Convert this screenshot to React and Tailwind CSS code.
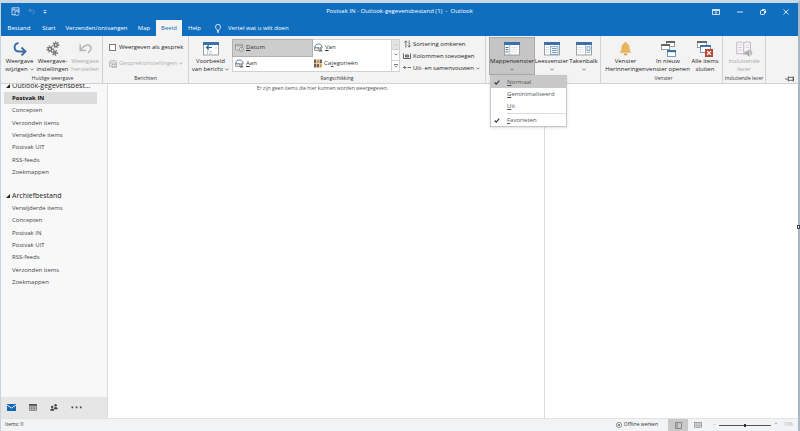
import React from 'react';

const tabs = [
  { name: 'Bestand', width: 'w-[36px]' },
  { name: 'Start', width: 'w-[24px]' },
  { name: 'Verzenden/ontvangen', width: 'w-[71px]' },
  { name: 'Map', width: 'w-[24px]' },
  { name: 'Beeld', width: 'w-[26px]' },
  { name: 'Help', width: 'w-[25px]' },
];

const mailFolders = ['Postvak IN', 'Concepten', 'Verzonden items', 'Verwijderde items', 'Postvak UIT', 'RSS-feeds', 'Zoekmappen'];
const archiveFolders = ['Verwijderde items', 'Concepten', 'Postvak IN', 'Postvak UIT', 'RSS-feeds', 'Verzonden items', 'Zoekmappen'];

function Svg({ className, box, children }) {
  return (
    <svg className={`shrink-0 ${className}`} viewBox={box} fill="none" aria-hidden="true">
      {children}
    </svg>
  );
}

function Chevron({ className = 'text-[#666]' }) {
  return (
    <Svg className={`h-[3px] w-[4px] ${className}`} box="0 0 4 3">
      <path d="M.5 .7 2 2.1 3.5 .7" stroke="currentColor" strokeWidth=".8" />
    </Svg>
  );
}

function Gear({ cx, cy, r }) {
  return (
    <g stroke="#747474">
      <circle cx={cx} cy={cy} r={r} strokeWidth="1.5" />
      <circle cx={cx} cy={cy} r={r + 1.3} strokeWidth="1.3" strokeDasharray="1.2 1.3" />
    </g>
  );
}

function WindowIcon({ variant }) {
  return (
    <Svg className="h-[14px] w-[16px]" box="0 0 16 14">
      <rect x=".5" y=".5" width="15" height="12.5" fill="#fff" stroke="#8b8b8b" strokeWidth=".8" />
      <path d="M0 0h16v3H0z" fill="#3b70a8" />
      {variant === 'preview' && (
        <>
          <path d="M4.5 3v10" stroke="#aaa" strokeWidth=".6" />
          <path d="M9 5.5H3.500m2.400-2-2.400 2 2.400 2" stroke="#2767a5" strokeWidth="1.2" />
          <path d="M6 9.5h3M6 11.3h3M12 6h2" stroke="#b6b6b6" strokeWidth=".7" />
        </>
      )}
      {variant === 'folders' && (
        <>
          <path d="M5.7 3v10" stroke="#8b8b8b" strokeWidth=".6" />
          <path d="M1.5 5.5h3M1.5 7.7h3M1.5 9.9h3" stroke="#397eb5" />
          <path d="M7.5 5.5h6M7.5 7.7h6M7.5 9.9h6" stroke="#d7d7d7" strokeWidth=".7" />
        </>
      )}
      {variant === 'reading' && (
        <>
          <path d="M1.5 5.5h3.5M1.5 7.7h3.5M1.5 9.9h3.5" stroke="#d0d0d0" strokeWidth=".7" />
          <rect x="6.6" y="4.4" width="7.4" height="8" fill="#edf3f8" stroke="#6492b9" strokeWidth=".7" />
          <path d="M8 6.5h4.7M8 8.5h4.7M8 10.5h4.7" stroke="#5786a7" strokeWidth=".8" />
        </>
      )}
      {variant === 'todo' && (
        <>
          <path d="M1.5 5.5h6M1.5 7.7h6M1.5 9.9h6" stroke="#d7d7d7" strokeWidth=".7" />
          <path d="M9.5 3v10" stroke="#8b8b8b" strokeWidth=".6" />
          <rect x="11" y="4.8" width="3" height="3.5" stroke="#397eb5" strokeWidth=".7" />
          <path d="M11 10.3h3" stroke="#397eb5" strokeWidth=".7" />
        </>
      )}
    </Svg>
  );
}

function SmallWindow({ x, y, w, h }) {
  return (
    <>
      <rect x={x + 0.4} y={y + 0.4} width={w - 0.8} height={h - 0.8} fill="#fff" stroke="#888" strokeWidth=".8" />
      <rect x={x} y={y} width={w} height="2" fill="#666" />
    </>
  );
}

function BigButton({ width, icon, lines, disabled, menu, pressed }) {
  return (
    <button
      type="button"
      disabled={disabled}
      className={`flex h-[36px] shrink-0 flex-col items-center pt-[2px] text-[6px] leading-[8px] whitespace-nowrap ${width} ${disabled ? 'text-[#aaa]' : 'text-[#262626]'} ${pressed ? 'bg-[#c5c5c5] outline outline-[#aaa]' : ''}`}
    >
      <span className="flex h-[17px] items-center justify-center">{icon}</span>
      <span>{lines[0]}</span>
      <span className="flex h-[8px] items-center gap-[2px]">
        {lines[1]}
        {menu && <Chevron />}
      </span>
    </button>
  );
}

function Group({ label, width, children }) {
  return (
    <section className={`flex shrink-0 flex-col border-r border-[#d2d2d2] pt-[2px] ${width}`}>
      <div className="flex h-[37px]">{children}</div>
      <h2 className="text-center text-[5px] leading-[7px] whitespace-nowrap text-[#333]">{label}</h2>
    </section>
  );
}

function PersonMail() {
  return (
    <Svg className="h-[9px] w-[9px]" box="0 0 9 9">
      <path d="M1 5V3.8C1 2 2.5 1 4.3 1S8 2 8 4v1" stroke="#4281b7" />
      <path d="M.5 4.5h4v3h-4zM.5 4.5l2 1.5 2-1.5" fill="#fff" stroke="#777" strokeWidth=".7" />
      <circle cx="6.5" cy="5.2" r="1.2" fill="#c48a50" />
      <path d="M4.7 8.5c0-3 3.7-3 3.7 0z" fill="#5d7993" />
    </Svg>
  );
}

function DateIcon() {
  return (
    <Svg className="h-[9px] w-[9px]" box="0 0 9 9">
      <path d="M.5 1.3h7V7h-7z" fill="#f4f4f4" stroke="#777" strokeWidth=".6" />
      <path d="M.5 2.800h7" stroke="#666" strokeWidth=".8" />
      <path d="M2.8 3v4M5.100 3v4M.5 5h7" stroke="#aaa" strokeWidth=".5" />
      <circle cx="6.5" cy="6.3" r="2" fill="#eee" stroke="#777" strokeWidth=".7" />
      <path d="M6.5 5.3v1.2h.9" stroke="#666" strokeWidth=".5" />
    </Svg>
  );
}

function CategoryIcon() {
  return (
    <Svg className="h-[9px] w-[8px]" box="0 0 8 9">
      <path d="M0 .5h2.300v3.700H0zM2.800 4.700h2.300v3.700H2.800z" fill="#8d5f45" />
      <path d="M2.800.5h2.300v3.700H2.800zM5.600 4.700h2.300v3.700H5.600z" fill="#cfa25c" />
      <path d="M5.600.5h2.300v3.700H5.600zM0 4.700h2.300v3.700H0z" fill="#705f51" />
    </Svg>
  );
}

function GalleryItem({ icon, letter, before = '', rest, selected }) {
  return (
    <button
      type="button"
      className={`flex items-center gap-[2px] pl-[2px] text-[6px] whitespace-nowrap text-[#333] ${selected ? 'bg-[#cdcdcd] outline outline-[#b0b0b0]' : ''}`}
    >
      {icon}
      <span>{before}<u>{letter}</u>{rest}</span>
    </button>
  );
}

function SmallCommand({ icon, children, menu }) {
  return (
    <button type="button" className="flex h-[12px] items-center gap-[2px] text-[6px] whitespace-nowrap text-[#262626]">
      <span className="flex w-[8px] justify-center">{icon}</span>
      {children}
      {menu && <Chevron />}
    </button>
  );
}

function MenuItem({ letter, rest, checked, active }) {
  return (
    <button
      type="button"
      role="menuitemcheckbox"
      aria-checked={Boolean(checked)}
      className={`flex h-[12px] w-full items-center text-[6px] text-[#555] ${active ? 'bg-[#c8c8c8]' : ''}`}
    >
      <span className="flex w-[16px] justify-start pl-[3px]">
        {checked && (
          <Svg className="h-[5px] w-[6px]" box="0 0 6 5">
            <path d="m.7 2.5 1.5 1.6L5.3.7" stroke="#333" strokeWidth="1.1" />
          </Svg>
        )}
      </span>
      <span><u>{letter}</u>{rest}</span>
    </button>
  );
}

function FolderTree({ title, folders, selected }) {
  return (
    <section>
      <h3 className="flex h-[12px] items-center gap-[2px] pl-[5px] text-[7px] leading-[8px] whitespace-nowrap text-[#222]">
        <Svg className="h-[4px] w-[4px]" box="0 0 4 4">
          <path d="M4 0v4H0z" fill="#222" />
        </Svg>
        {title}
      </h3>
      <ul className="mr-[10px] ml-[3px] grid h-[87px] auto-rows-fr">
        {folders.map((name) => (
          <li key={name} className={`flex ${name === selected ? 'bg-[#dcdcdc] font-bold text-[#111]' : 'text-[#444]'}`}>
            <a href="#" className="flex flex-1 items-center pl-[8px] text-[6px] whitespace-nowrap">{name}</a>
          </li>
        ))}
      </ul>
    </section>
  );
}

function TitleBar() {
  return (
    <div className="grid h-[17px] grid-cols-[1fr_auto_1fr] items-center text-white">
      <div className="flex items-center gap-[8px] pl-[10px]">
        <button type="button" aria-label="Verzenden en ontvangen">
          <Svg className="h-[9px] w-[9px]" box="0 0 9 9">
            <path d="M1 .8h7v3M1 .8v7h2M1 3h7M3 .8V3" stroke="#d5e7f7" strokeWidth=".8" />
            <path d="M3.5 6a2.3 2.3 0 0 1 4-1.2M8.2 3.6v1.6H6.6M8.2 6.6a2.3 2.3 0 0 1-4 1M3.5 8.6V7.2h1.4" stroke="#fff" strokeWidth=".7" />
          </Svg>
        </button>
        <button type="button" aria-label="Ongedaan maken">
          <Svg className="h-[7px] w-[7px]" box="0 0 7 7">
            <path d="M2.7.7.8 2.5l1.9 1.8M1 2.5h3.2c2.6 0 2.6 3.4.4 3.8" stroke="#5794d0" />
          </Svg>
        </button>
        <button type="button" aria-label="Werkbalk aanpassen">
          <Svg className="h-[4px] w-[4px]" box="0 0 4 4">
            <path d="M.5.6h3" stroke="#fff" strokeWidth=".7" />
            <path d="M.5 2h3L2 3.7z" fill="#fff" />
          </Svg>
        </button>
      </div>
      <h1 className="text-[6px] whitespace-pre">Postvak IN - Outlook-gegevensbestand (1)  -  Outlook</h1>
      <div className="flex items-center justify-end gap-[17px] pr-[9px]">
        <button type="button" aria-label="Weergaveopties voor lint">
          <Svg className="h-[6px] w-[8px]" box="0 0 8 6">
            <path d="M.5.5h7v5h-7zM.5 1.5h7M4 4.8V2.7M3 3.6l1-1 1 1" stroke="#fff" strokeWidth=".8" />
          </Svg>
        </button>
        <button type="button" aria-label="Minimaliseren">
          <Svg className="h-[6px] w-[6px]" box="0 0 6 6">
            <path d="M0 3h6" stroke="#fff" strokeWidth=".8" />
          </Svg>
        </button>
        <button type="button" aria-label="Verkleinen">
          <Svg className="h-[6px] w-[6px]" box="0 0 6 6">
            <rect x=".5" y="1.5" width="4" height="4" rx=".8" stroke="#fff" strokeWidth=".9" />
            <path d="M2 .5h2.5a1 1 0 0 1 1 1V4" stroke="#fff" strokeWidth=".9" />
          </Svg>
        </button>
        <button type="button" aria-label="Sluiten">
          <Svg className="h-[6px] w-[6px]" box="0 0 6 6">
            <path d="m.5.5 5 5m0-5-5 5" stroke="#fff" strokeWidth=".8" />
          </Svg>
        </button>
      </div>
    </div>
  );
}

function TabBar() {
  return (
    <nav className="flex h-[16px] text-[6px] text-white">
      {tabs.map(({ name, width }) => (
        <a
          key={name}
          href="#"
          className={`flex shrink-0 items-center justify-center whitespace-nowrap ${width} ${name === 'Beeld' ? 'bg-[#f3f3f3] text-[#1569b5]' : ''}`}
        >
          {name}
        </a>
      ))}
      <button type="button" className="ml-[8px] flex items-center gap-[7px] whitespace-nowrap">
        <Svg className="h-[9px] w-[6px]" box="0 0 6 9">
          <path d="M2 6.4C2 5 .5 4.6.5 2.9a2.5 2.5 0 0 1 5 0C5.500 4.600 4 5 4 6.400zM2 7.400h2M2.300 8.500h1.400" stroke="#fff" strokeWidth=".8" />
        </Svg>
        Vertel wat u wilt doen
      </button>
    </nav>
  );
}

function Ribbon() {
  return (
    <div className="flex h-[48px] border-b border-[#d2d2d2] bg-[#f3f3f3]">
      <Group label="Huidige weergave" width="w-[102px] pl-[2px]">
        <BigButton
          width="w-[33px]"
          lines={['Weergave', 'wijzigen']}
          menu
          icon={
            <Svg className="h-[14px] w-[14px]" box="0 0 14 14">
              <path d="M5.500 1C0 2 .5 9.500 6 9.500h6M8.500 5.500l4 4-4 4" stroke="#3c6ea3" strokeWidth="1.9" />
            </Svg>
          }
        />
        <BigButton
          width="w-[33px]"
          lines={['Weergave-', 'instellingen']}
          icon={
            <Svg className="h-[15px] w-[14px]" box="0 0 14 15">
              <Gear cx={9.8} cy={3.800} r={1.600} />
              <Gear cx={4} cy={8} r={1.700} />
              <Gear cx={8.800} cy={11.700} r={1.200} />
            </Svg>
          }
        />
        <BigButton
          width="w-[32px]"
          disabled
          lines={['Weergave', 'herstellen']}
          icon={
            <Svg className="h-[11px] w-[13px]" box="0 0 13 11">
              <path d="M1.200 1.500v6h6M1.500 7.200C4 3 8 1 10.500 2.500s1.500 5-1.500 7.500" stroke="#b7b7b7" strokeWidth="1.600" />
            </Svg>
          }
        />
      </Group>

      <Group label="Berichten" width="w-[86px]">
        <div className="flex flex-col gap-[5px] pt-[4px] pl-[6px] text-[6px] whitespace-nowrap">
          <label className="flex h-[11px] items-center gap-[3px] text-[#262626]">
            <input type="checkbox" className="m-0 h-[7px] w-[7px] appearance-none border border-[#777] bg-white" />
            Weergeven als gesprek
          </label>
          <button type="button" disabled className="flex h-[11px] items-center gap-[2px] text-[#b0b0b0]">
            <Svg className="h-[8px] w-[8px]" box="0 0 8 8">
              <path d="M.5 6.500V1.500l1-1h5l1 1v5zM.5 3h7M3 4.500h4.500v3H3z" fill="#e5e5e5" stroke="#b5b5b5" strokeWidth=".8" />
            </Svg>
            Gespreksinstellingen
            <Chevron className="text-[#b0b0b0]" />
          </button>
        </div>
      </Group>

      <Group label="Rangschikking" width="w-[297px]">
        <BigButton width="w-[43px]" lines={['Voorbeeld', 'van bericht']} menu icon={<WindowIcon variant="preview" />} />
        <div className="mt-[1px] flex h-[33px] w-[168px] shrink-0 border border-[#d0d0d0] bg-white">
          <div className="grid flex-1 grid-cols-2 grid-rows-2">
            <GalleryItem selected icon={<DateIcon />} letter="D" rest="atum" />
            <GalleryItem icon={<PersonMail />} letter="V" rest="an" />
            <GalleryItem icon={<PersonMail />} letter="A" rest="an" />
            <GalleryItem icon={<CategoryIcon />} before="Ca" letter="t" rest="egorieën" />
          </div>
          <div className="grid w-[8px] grid-rows-3 divide-y divide-[#d0d0d0] border-l border-[#d0d0d0]">
            <button type="button" aria-label="Vorige rij" className="flex items-center justify-center bg-[#e4e4e4]">
              <Chevron className="rotate-180 text-[#bbb]" />
            </button>
            <button type="button" aria-label="Volgende rij" className="flex items-center justify-center"><Chevron /></button>
            <button type="button" aria-label="Meer" className="flex flex-col items-center justify-center">
              <span className="h-px w-[4px] bg-[#777]" />
              <Chevron />
            </button>
          </div>
        </div>
        <div className="flex flex-col pl-[3px]">
          <SmallCommand
            icon={
              <Svg className="h-[8px] w-[7px]" box="0 0 7 8">
                <path d="M1.800 7.500V1M.3 2.500 1.800.8l1.500 1.700M5.200.5V7M3.700 5.500l1.500 1.700 1.500-1.700" stroke="#555" strokeWidth=".8" />
              </Svg>
            }
          >
            Sortering omkeren
          </SmallCommand>
          <SmallCommand
            icon={
              <Svg className="h-[6px] w-[8px]" box="0 0 8 6">
                <path d="M.5.5v5M7.500.5v5M.5 5.500h7M2.500 2v2h3V2zM4 2v2" stroke="#555" strokeWidth=".9" />
              </Svg>
            }
          >
            Kolommen toevoegen
          </SmallCommand>
          <SmallCommand
            menu
            icon={
              <Svg className="h-[4px] w-[8px]" box="0 0 8 4">
                <path d="M0 1.500h3.500M1.700 0v3M4.500 1.500H8" stroke="#666" strokeWidth=".9" />
              </Svg>
            }
          >
            Uit- en samenvouwen
          </SmallCommand>
        </div>
      </Group>

      <Group label="" width="w-[115px] pl-[4px]">
        <div className="relative">
          <BigButton pressed width="w-[44px]" lines={['Mappenvenster', '']} menu icon={<WindowIcon variant="folders" />} />
          <div role="menu" className="absolute top-full left-0 z-10 w-[77px] border border-[#c6c6c6] bg-white shadow-sm">
            <MenuItem letter="N" rest="ormaal" checked active />
            <MenuItem letter="G" rest="eminimaliseerd" />
            <MenuItem letter="U" rest="it" />
            <hr className="mt-px ml-[16px] border-[#ddd]" />
            <MenuItem letter="F" rest="avorieten" checked />
          </div>
        </div>
        <BigButton width="w-[35px]" lines={['Leesvenster', '']} menu icon={<WindowIcon variant="reading" />} />
        <BigButton width="w-[29px]" lines={['Takenbalk', '']} menu icon={<WindowIcon variant="todo" />} />
      </Group>

      <Group label="Venster" width="w-[122px] pl-[4px]">
        <BigButton
          width="w-[41px]"
          lines={['Venster', 'Herinneringen']}
          icon={
            <Svg className="h-[14px] w-[13px]" box="0 0 13 14">
              <path d="M6.500 0c.8 0 1.200.5 1.200 1.200C10 2 10.500 3.600 10.500 6c0 2.500.8 3.500 2 4.800H.5C1.700 9.500 2.500 8.500 2.500 6c0-2.400.5-4 2.800-4.800C5.300.5 5.700 0 6.500 0z" fill="#e9b45c" />
              <path d="M4.500 11.500h4a2 2 0 0 1-4 0z" fill="#d99c43" />
            </Svg>
          }
        />
        <BigButton
          width="w-[44px]"
          lines={['In nieuw', 'venster openen']}
          icon={
            <Svg className="h-[16px] w-[15px]" box="0 0 15 16">
              <SmallWindow x={5} y={0} w={9} h={6} />
              <SmallWindow x={0} y={3} w={9} h={6} />
              <rect x="6.400" y="9.400" width="8" height="6" fill="#fff" stroke="#4e83b4" strokeWidth=".8" />
              <path d="M6 9h9v2.200H6z" fill="#3b70a8" />
            </Svg>
          }
        />
        <BigButton
          width="w-[30px]"
          lines={['Alle items', 'sluiten']}
          icon={
            <Svg className="h-[16px] w-[16px]" box="0 0 16 16">
              <SmallWindow x={0} y={0} w={10} h={7} />
              <rect x="3.400" y="4.400" width="10" height="7" fill="#fff" stroke="#4e83b4" strokeWidth=".8" />
              <path d="M3 4h10.800v2H3z" fill="#3b70a8" />
              <path d="M8 8h8v8H8z" fill="#b8432f" />
              <path d="m10 10 4 4m0-4-4 4" stroke="#fff" strokeWidth="1.200" />
            </Svg>
          }
        />
      </Group>

      <Group label="Insluitende lezer" width="w-[43px]">
        <BigButton
          disabled
          width="w-[42px]"
          lines={['Insluitende', 'lezer']}
          icon={
            <Svg className="h-[16px] w-[17px]" box="0 0 17 16">
              <path d="M.8 1.500C3.500.8 6 .8 7.700 2 9.500.8 12 .8 14.500 1.500V13c-2.500-.7-5-.7-6.800.5C6 12.300 3.500 12.300.8 13zM7.700 2v11" fill="#f8f4f8" stroke="#b9b4bb" strokeWidth=".9" />
              <path d="M2.500 4h3.500M2.500 6.500h3.500M2.500 9h3.500M9.500 4h3.500M9.500 6.500h3.500" stroke="#c8c3ca" strokeWidth=".7" />
              <path d="M8.500 10.500h2l3-2.500v8l-3-2.500h-2z" fill="#aaa" />
              <path d="M14.800 9.500c1.400 1.500 1.400 3.500 0 5" stroke="#aaa" />
            </Svg>
          }
        />
      </Group>

      <div className="flex flex-1 items-end justify-end pr-[4px] pb-[1px]">
        <button type="button" aria-label="Lint vastmaken">
          <Svg className="h-[6px] w-[9px]" box="0 0 9 6">
            <path d="M0 3h3M3.300.5v5M3.300 1.300h5v3h-5M8.300.5v5" stroke="#444" strokeWidth=".8" />
          </Svg>
        </button>
      </div>
    </div>
  );
}

function Sidebar() {
  return (
    <aside className="flex w-[107px] shrink-0 flex-col border-r border-[#dcdcdc] bg-[#f8f8f8]">
      <div className="flex flex-1 flex-col gap-[11px] overflow-hidden">
        <div className="-mt-[4px]">
          <FolderTree title="Outlook-gegevensbest..." folders={mailFolders} selected="Postvak IN" />
        </div>
        <FolderTree title="Archiefbestand" folders={archiveFolders} />
      </div>
      <nav className="flex h-[21px] items-center gap-[13px] bg-[#e6e6e6] pl-[6px]">
        <button type="button" aria-label="E-mail">
          <Svg className="h-[7px] w-[9px]" box="0 0 9 7">
            <path d="M0 0h9v7H0z" fill="#1267b4" />
            <path d="m0 1 4.500 3L9 1" stroke="#fff" strokeWidth=".9" />
          </Svg>
        </button>
        <button type="button" aria-label="Agenda">
          <Svg className="h-[7px] w-[8px]" box="0 0 8 7">
            <path d="M.4.4h7.200v6.200H.4zM.4 3h7.200M.4 4.800h7.200M2.800 1v5.600M5.200 1v5.600" stroke="#666" strokeWidth=".7" />
            <path d="M0 0h8v1.800H0z" fill="#555" />
          </Svg>
        </button>
        <button type="button" aria-label="Personen">
          <Svg className="h-[7px] w-[8px]" box="0 0 8 7">
            <circle cx="5.600" cy="1.300" r="1.200" fill="#444" />
            <path d="M3.700 5.200c0-3 4-3 4 0z" fill="#444" />
            <circle cx="2.200" cy="3" r="1.200" fill="#444" />
            <path d="M.2 6.800c0-3 4-3 4 0z" fill="#444" />
          </Svg>
        </button>
        <button type="button" aria-label="Meer opties">
          <Svg className="h-[3px] w-[11px]" box="0 0 11 3">
            <path d="M.5.600h1.700v1.700H.5zM4.700.6h1.700v1.700H4.700zM8.900.6h1.700v1.700H8.900z" fill="#444" />
          </Svg>
        </button>
      </nav>
    </aside>
  );
}

function StatusBar() {
  return (
    <footer className="flex h-[13px] items-center justify-between border-t border-[#e2e2e2] bg-[#f1f3f4] text-[5px] whitespace-nowrap text-[#333]">
      <span className="pl-[4px]">Items: 0</span>
      <div className="flex h-full items-center">
        <span className="flex items-center gap-[2px] pr-[10px]">
          <Svg className="h-[6px] w-[6px]" box="0 0 6 6">
            <circle cx="3" cy="3" r="2.600" stroke="#555" strokeWidth=".6" />
            <path d="m2 2 2 2m0-2L2 4" stroke="#555" strokeWidth=".7" />
          </Svg>
          Offline werken
        </span>
        <button type="button" aria-label="Normale weergave" className="flex h-full w-[20px] items-center justify-center bg-[#c9c9c9]">
          <Svg className="h-[7px] w-[7px]" box="0 0 7 7">
            <path d="M.5.5h6v6h-6zM2.200.5v6" stroke="#777" strokeWidth=".8" />
          </Svg>
        </button>
        <button type="button" aria-label="Leesweergave" className="flex h-full w-[20px] items-center justify-center">
          <Svg className="h-[6px] w-[8px]" box="0 0 8 6">
            <path d="M.5.5h2.700l.8.5.8-.5h2.700v4.700H4.800L4 5.700l-.8-.5H.5zM4 1v4.500M1.500 2h1.500M1.500 3.500h1.500M5 2h1.500M5 3.500h1.500" stroke="#777" strokeWidth=".7" />
          </Svg>
        </button>
        <button type="button" aria-label="Uitzoomen" className="w-[10px] pl-[3px] text-[#999]">−</button>
        <input
          type="range"
          aria-label="Zoomen"
          defaultValue="50"
          className="mx-[1px] h-px w-[52px] appearance-none bg-[#555] [&::-webkit-slider-thumb]:h-[3px] [&::-webkit-slider-thumb]:w-[2px] [&::-webkit-slider-thumb]:appearance-none [&::-webkit-slider-thumb]:bg-[#333]"
        />
        <button type="button" aria-label="Inzoomen" className="w-[8px] text-[#999]">+</button>
        <span className="w-[18px] pr-[5px] text-right text-[#b5b5b5]">10%</span>
      </div>
    </footer>
  );
}

export default function App() {
  return (
    <div className="flex min-h-screen flex-col border-t-[3px] border-r-2 border-l border-t-[#c9d9e9] border-r-[#a9b8c2] border-l-[#c9d3dc] bg-white font-['Open_Sans','Noto_Sans',sans-serif]">
      <header>
        <div className="bg-[#106ebe]">
          <TitleBar />
          <TabBar />
        </div>
        <Ribbon />
      </header>
      <main className="flex flex-1">
        <Sidebar />
        <section className="flex-1 border-r border-[#dcdcdc] text-center text-[5px] leading-[8px] text-[#555]">
          <p className="pr-[7px]">Er zijn geen items die hier kunnen worden weergegeven.</p>
        </section>
        <section aria-label="Leesvenster" className="flex w-[253px] shrink-0 items-center justify-end">
          <span className="-mr-[2px] mb-[48px] h-[4px] w-[3px] border border-[#444] bg-white" />
        </section>
      </main>
      <StatusBar />
    </div>
  );
}
